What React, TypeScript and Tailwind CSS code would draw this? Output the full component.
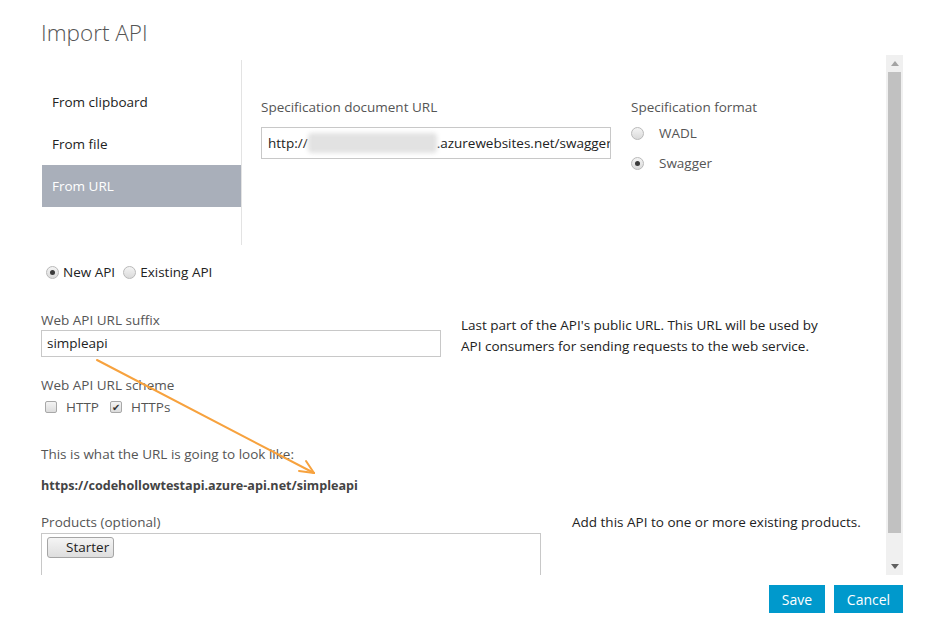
import React from 'react'

const font = { fontFamily: '"Segoe UI", "Open Sans", "Noto Sans", sans-serif' }

function Radio({ checked }: { checked?: boolean }) {
  return (
    <span className="inline-flex w-[13px] h-[13px] shrink-0 items-center justify-center rounded-full border border-[#b9b9b9] bg-gradient-to-b from-[#f4f4f4] to-[#dadada]">
      {checked && <span className="block w-[5px] h-[5px] rounded-full bg-[#3a3a3a]" />}
    </span>
  )
}

function Checkbox({ checked }: { checked?: boolean }) {
  return (
    <span className="inline-flex w-[12px] h-[12px] shrink-0 items-center justify-center rounded-[2px] border border-[#a8a8a8] bg-gradient-to-b from-[#f4f4f4] to-[#dcdcdc] text-[10px] leading-none text-[#333]">
      {checked && '✔'}
    </span>
  )
}

function Tab({ label, active }: { label: string; active?: boolean }) {
  return (
    <div
      className={
        'h-[42px] flex items-center pl-[10px] text-[13.5px] ' +
        (active ? 'bg-[#a9afba] text-white' : 'text-[#222]')
      }
    >
      {label}
    </div>
  )
}

export default function App() {
  return (
    <div className="relative w-[946px] h-[637px] bg-white overflow-hidden text-[#555] text-[13.5px]" style={font}>
      <h1 className="pl-[41px] pt-[17px] h-[55px] text-[22.5px] font-light text-[#555] leading-[32px]">Import API</h1>

      <div className="flex h-[520px]">
        {/* scrollable content */}
        <div className="w-[886px] overflow-hidden pl-[41px]">
          <div className="flex">
            <div className="ml-[1px] w-[200px] pt-[21px] border-r border-[#e3e3e3] h-[185px] mt-[5px]">
              <Tab label="From clipboard" />
              <Tab label="From file" />
              <Tab label="From URL" active />
            </div>
            <div className="pl-[19px] pt-[42px] flex">
              <div className="w-[370px]">
                <div className="leading-[20px]">Specification document URL</div>
                <div className="mt-[10px] w-[350px] h-[32px] border border-[#c8c8c8] flex items-center pl-[6px] text-[#222] overflow-hidden whitespace-nowrap">
                  <span>http://</span>
                  <span className="inline-block shrink-0 w-[129px] h-[20px] bg-[#e2e2e2] blur-[2px] rounded-sm" />
                  <span>.azurewebsites.net/swagger/</span>
                </div>
              </div>
              <div>
                <div className="leading-[20px]">Specification format</div>
                <div className="mt-[6px] flex items-center h-[20px] gap-[15px]">
                  <Radio />
                  <span>WADL</span>
                </div>
                <div className="mt-[10px] flex items-center h-[20px] gap-[15px]">
                  <Radio checked />
                  <span>Swagger</span>
                </div>
              </div>
            </div>
          </div>

          <div className="mt-[17px] flex items-center gap-[4px] text-[#222] pl-[5px] h-[20px]">
            <Radio checked />
            <span className="mr-[4px]">New API</span>
            <Radio />
            <span>Existing API</span>
          </div>

          <div className="mt-[28px] flex">
            <div className="w-[400px]">
              <div className="leading-[20px]">Web API URL suffix</div>
              <div className="w-[400px] h-[27px] border border-[#c8c8c8] flex items-center pl-[5px] text-[#222]">simpleapi</div>
            </div>
            <div className="ml-[20px] mt-[5px] leading-[21px] text-[#222]">
              Last part of the API's public URL. This URL will be used by
              <br />
              API consumers for sending requests to the web service.
            </div>
          </div>

          <div className="mt-[18px] leading-[20px]">Web API URL scheme</div>
          <div className="mt-[2px] flex items-center h-[20px] pl-[4px] gap-[9px]">
            <Checkbox />
            <span className="mr-[2px]">HTTP</span>
            <Checkbox checked />
            <span>HTTPs</span>
          </div>

          <div className="mt-[27px] leading-[20px]">This is what the URL is going to look like:</div>
          <div className="mt-[12px] text-[12.6px] leading-[20px] font-bold text-[#444]">https://codehollowtestapi.azure-api.net/simpleapi</div>

          <div className="mt-[16px] flex">
            <div className="w-[500px]">
              <div className="leading-[20px]">Products (optional)</div>
              <div className="mt-[1px] w-[500px] h-[80px] border border-[#c8c8c8] pt-[3px] pl-[5px]">
                <span className="inline-flex items-center h-[21px] pl-[18px] pr-[4px] border border-[#a5a5a5] rounded-[3px] bg-gradient-to-b from-[#f5f5f5] to-[#dedede] text-[#222]">
                  Starter
                </span>
              </div>
            </div>
            <div className="ml-[31px] leading-[20px] text-[#222]">Add this API to one or more existing products.</div>
          </div>
        </div>

        {/* scrollbar */}
        <div className="w-[17px] h-[520px] bg-[#f0f0f0] flex flex-col items-center">
          <div className="h-[17px] flex items-center justify-center">
            <svg width="8" height="5" viewBox="0 0 8 5"><path d="M4 0 L8 5 L0 5 Z" fill="#a3a3a3" /></svg>
          </div>
          <div className="w-[13px] h-[461px] bg-[#c1c1c1]" />
          <div className="flex-1" />
          <div className="h-[17px] flex items-center justify-center">
            <svg width="8" height="5" viewBox="0 0 8 5"><path d="M0 0 L8 0 L4 5 Z" fill="#606060" /></svg>
          </div>
        </div>
      </div>

      <div className="flex justify-end gap-[9px] pr-[43px] pt-[10px]">
        <button className="w-[56px] h-[28px] bg-[#0099cc] text-white text-[14px]">Save</button>
        <button className="w-[69px] h-[28px] bg-[#0099cc] text-white text-[14px]">Cancel</button>
      </div>

      {/* annotation arrow */}
      <svg className="absolute left-0 top-0 pointer-events-none" width="946" height="637">
        <g stroke="#f7a23e" strokeWidth="2" fill="none" strokeLinecap="round">
          <line x1="97" y1="360" x2="314" y2="473" />
          <line x1="314" y1="473" x2="299" y2="471" />
          <line x1="314" y1="473" x2="306" y2="461" />
        </g>
      </svg>
    </div>
  )
}
